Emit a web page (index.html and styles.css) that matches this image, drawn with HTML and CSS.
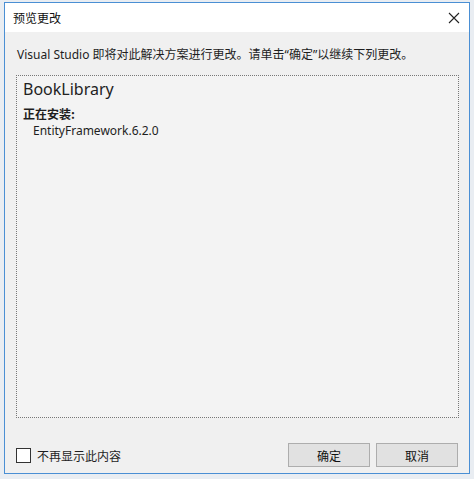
FILE: index.html
```html
<!DOCTYPE html>
<html lang="zh-CN">

<head>
    <meta charset="UTF-8">
    <title>预览更改</title>
    <link rel="stylesheet" href="styles.css">
</head>

<body>
    <div class="dialog">
        <div class="titlebar">
            <span class="title">预览更改</span>
            <svg class="close" width="12" height="12" viewBox="0 0 12 12">
                <path d="M1 1 L11 11 M11 1 L1 11" stroke="#222" stroke-width="1.1" fill="none" />
            </svg>
        </div>

        <div class="content">
            <p class="intro">Visual Studio 即将对此解决方案进行更改。请单击“确定”以继续下列更改。</p>

            <div class="changes">
                <div class="project">BookLibrary</div>
                <div class="section">正在安装:</div>
                <div class="package">EntityFramework.6.2.0</div>
            </div>

            <div class="footer">
                <label class="dont-show">
                    <span class="checkbox"></span>
                    不再显示此内容
                </label>
                <div class="buttons">
                    <button class="btn">确定</button>
                    <button class="btn">取消</button>
                </div>
            </div>
        </div>
    </div>
</body>

</html>
```

FILE: styles.css
```css
body {
    margin: 0;
    width: 474px;
    height: 479px;
    background-color: #e9edf2;
    font-family: "Noto Sans", "Noto Sans CJK SC", sans-serif;
    font-size: 12px;
    color: #1e1e1e;
    overflow: hidden;
}

.dialog {
    margin: 2px 0 0 4px;
    width: 464px;
    height: 470px;
    border: 1px solid #4a8fd4;
    background-color: #f0f0f0;
    display: flex;
    flex-direction: column;
}

.titlebar {
    height: 29px;
    background-color: #fff;
    display: flex;
    align-items: center;
    justify-content: space-between;
    padding: 0 9px 0 8px;
}

.title {
    font-family: "Noto Sans CJK SC", sans-serif;
    font-size: 12px;
    color: #111;
}

.content {
    flex: 1;
    display: flex;
    flex-direction: column;
    padding: 0 10px 0 11px;
}

.intro {
    margin: 14px 0 11px 1px;
    line-height: 18px;
    font-size: 12px;
}

.changes {
    height: 337px;
    border: 1px dotted #777;
    background-color: #f3f3f3;
    padding: 1px 6px 3px;
}

.project {
    font-size: 16px;
    line-height: 24px;
    color: #222;
}

.section {
    font-family: "Noto Sans CJK SC", sans-serif;
    font-weight: bold;
    font-size: 12px;
    line-height: 16px;
    margin-top: 5px;
}

.package {
    font-size: 12px;
    line-height: 18px;
    padding-left: 10px;
}

.footer {
    display: flex;
    justify-content: space-between;
    align-items: center;
    margin-top: 25px;
}

.dont-show {
    display: flex;
    align-items: center;
    gap: 6px;
    font-family: "Noto Sans CJK SC", sans-serif;
    font-size: 12px;
}

.checkbox {
    width: 13px;
    height: 13px;
    border: 1px solid #333;
    background-color: #fff;
}

.buttons {
    display: flex;
    gap: 6px;
    margin-right: 1px;
}

.btn {
    width: 82px;
    height: 24px;
    border: 1px solid #adadad;
    background-color: #e1e1e1;
    font-family: "Noto Sans CJK SC", sans-serif;
    font-size: 12px;
    color: #111;
    padding: 0;
}
```
